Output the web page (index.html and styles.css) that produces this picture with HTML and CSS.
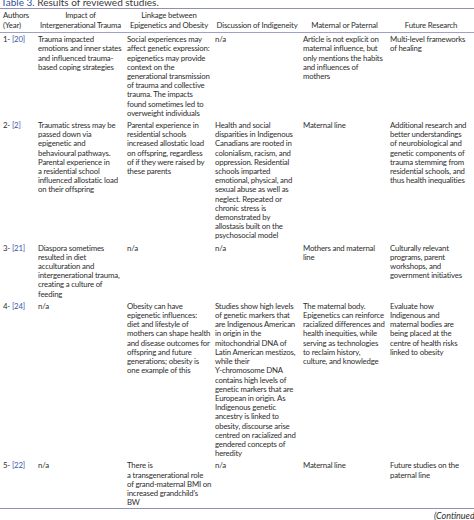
FILE: index.html
```html
<!DOCTYPE html>
<html>
<head>
<meta charset="utf-8">
<link rel="stylesheet" href="styles.css">
</head>
<body>
<div class="caption"><span class="label">Table 3.</span> Results of reviewed studies.</div>
<div class="results">
  <div class="th left">Authors<br>(Year)</div>
  <div class="th">Impact of<br>Intergenerational Trauma</div>
  <div class="th">Linkage between<br>Epigenetics and Obesity</div>
  <div class="th">Discussion of Indigeneity</div>
  <div class="th">Maternal or Paternal</div>
  <div class="th">Future Research</div>

  <div class="td first">1- <span class="ref">[20]</span></div>
  <div class="td">Trauma impacted<br>emotions and inner states<br>and influenced trauma-<br>based coping strategies</div>
  <div class="td">Social experiences may<br>affect genetic expression:<br>epigenetics may provide<br>context on the<br>generational transmission<br>of trauma and collective<br>trauma. The impacts<br>found sometimes led to<br>overweight individuals</div>
  <div class="td">n/a</div>
  <div class="td">Article is not explicit on<br>maternal influence, but<br>only mentions the habits<br>and influences of<br>mothers</div>
  <div class="td">Multi-level frameworks<br>of healing</div>

  <div class="td first">2- <span class="ref">[2]</span></div>
  <div class="td">Traumatic stress may be<br>passed down via<br>epigenetic and<br>behavioural pathways.<br>Parental experience in<br>a residential school<br>influenced allostatic load<br>on their offspring</div>
  <div class="td">Parental experience in<br>residential schools<br>increased allostatic load<br>on offspring, regardless<br>of if they were raised by<br>these parents</div>
  <div class="td">Health and social<br>disparities in Indigenous<br>Canadians are rooted in<br>colonialism, racism, and<br>oppression. Residential<br>schools imparted<br>emotional, physical, and<br>sexual abuse as well as<br>neglect. Repeated or<br>chronic stress is<br>demonstrated by<br>allostasis built on the<br>psychosocial model</div>
  <div class="td">Maternal line</div>
  <div class="td">Additional research and<br>better understandings<br>of neurobiological and<br>genetic components of<br>trauma stemming from<br>residential schools, and<br>thus health inequalities</div>

  <div class="td first">3- <span class="ref">[21]</span></div>
  <div class="td">Diaspora sometimes<br>resulted in diet<br>acculturation and<br>intergenerational trauma,<br>creating a culture of<br>feeding</div>
  <div class="td">n/a</div>
  <div class="td">n/a</div>
  <div class="td">Mothers and maternal<br>line</div>
  <div class="td">Culturally relevant<br>programs, parent<br>workshops, and<br>government initiatives</div>

  <div class="td first">4- <span class="ref">[24]</span></div>
  <div class="td">n/a</div>
  <div class="td">Obesity can have<br>epigenetic influences:<br>diet and lifestyle of<br>mothers can shape health<br>and disease outcomes for<br>offspring and future<br>generations; obesity is<br>one example of this</div>
  <div class="td">Studies show high levels<br>of genetic markers that<br>are Indigenous American<br>in origin in the<br>mitochondrial DNA of<br>Latin American mestizos,<br>while their<br>Y-chromosome DNA<br>contains high levels of<br>genetic markers that are<br>European in origin. As<br>Indigenous genetic<br>ancestry is linked to<br>obesity, discourse arise<br>centred on racialized and<br>gendered concepts of<br>heredity</div>
  <div class="td">The maternal body.<br>Epigenetics can reinforce<br>racialized differences and<br>health inequities, while<br>serving as technologies<br>to reclaim history,<br>culture, and knowledge</div>
  <div class="td">Evaluate how<br>Indigenous and<br>maternal bodies are<br>being placed at the<br>centre of health risks<br>linked to obesity</div>

  <div class="td first">5- <span class="ref">[22]</span></div>
  <div class="td">n/a</div>
  <div class="td">There is<br>a transgenerational role<br>of grand-maternal BMI on<br>increased grandchild's<br>BW</div>
  <div class="td">n/a</div>
  <div class="td">Maternal line</div>
  <div class="td">Future studies on the<br>paternal line</div>
</div>
<div class="cont">(Continued)</div>
</body>
</html>
```

FILE: styles.css
```css
html, body {
  margin: 0;
  padding: 0;
  background: #ffffff;
}
body {
  width: 474px;
  height: 520px;
  overflow: hidden;
  font-family: Lato, "Open Sans", sans-serif;
  color: #2e2e2e;
}
.caption {
  font-size: 10px;
  line-height: 5px;
  height: 8px;
  padding-left: 1px;
  color: #3a3a3a;
  white-space: nowrap;
}
.caption .label {
  color: #2f4f9a;
}
.results {
  display: grid;
  grid-template-columns: 36px 89px 88px 88px 87px 86px;
  border-top: 1.5px solid #8f8fb8;
  border-bottom: 1.5px solid #8f8fb8;
  font-size: 7.8px;
  letter-spacing: -0.18px;
}
.th {
  display: flex;
  flex-direction: column;
  justify-content: flex-end;
  align-items: center;
  text-align: center;
  white-space: nowrap;
  line-height: 9.6px;
  padding: 2px 2px 2px 2px;
  border-bottom: 1px solid #a0a0c4;
}
.th.left {
  align-items: flex-start;
  text-align: left;
  padding-left: 3px;
}
.td {
  white-space: nowrap;
  line-height: 9.2px;
  padding: 2px 1px 1px 2px;
}
.td.first {
  padding-left: 3px;
}
.ref {
  color: #3a56a8;
}
.cont {
  text-align: right;
  font-size: 9px;
  line-height: 11px;
  font-style: italic;
  margin-right: -3px;
  padding-top: 1px;
  white-space: nowrap;
}
```
